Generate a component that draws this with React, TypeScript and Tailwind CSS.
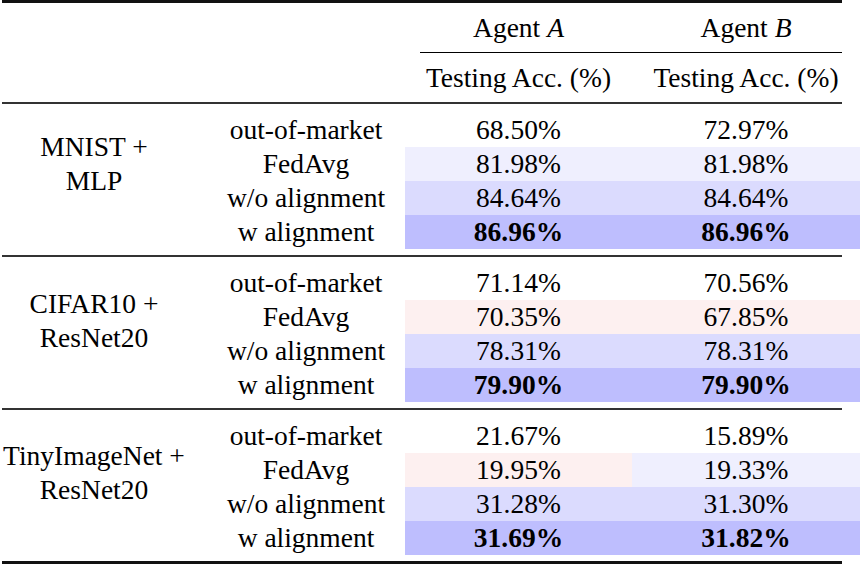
import React from "react";

type Cell = { v: string; bg: string };
type Row = { m: string; a: Cell; b: Cell; bold?: boolean };
type Block = { l1: string; l2: string; pt: string; rows: Row[] };

const W = "";
const B1 = "bg-[#efeffe]";
const B2 = "bg-[#dbdbfe]";
const B3 = "bg-[#bebefe]";
const R1 = "bg-[#fdf0f0]";

const blocks: Block[] = [
  {
    l1: "MNIST +",
    l2: "MLP",
    pt: "pt-[17px]",
    rows: [
      { m: "out-of-market", a: { v: "68.50%", bg: W }, b: { v: "72.97%", bg: W } },
      { m: "FedAvg", a: { v: "81.98%", bg: B1 }, b: { v: "81.98%", bg: B1 } },
      { m: "w/o alignment", a: { v: "84.64%", bg: B2 }, b: { v: "84.64%", bg: B2 } },
      { m: "w alignment", a: { v: "86.96%", bg: B3 }, b: { v: "86.96%", bg: B3 }, bold: true },
    ],
  },
  {
    l1: "CIFAR10 +",
    l2: "ResNet20",
    pt: "pt-[21px]",
    rows: [
      { m: "out-of-market", a: { v: "71.14%", bg: W }, b: { v: "70.56%", bg: W } },
      { m: "FedAvg", a: { v: "70.35%", bg: R1 }, b: { v: "67.85%", bg: R1 } },
      { m: "w/o alignment", a: { v: "78.31%", bg: B2 }, b: { v: "78.31%", bg: B2 } },
      { m: "w alignment", a: { v: "79.90%", bg: B3 }, b: { v: "79.90%", bg: B3 }, bold: true },
    ],
  },
  {
    l1: "TinyImageNet +",
    l2: "ResNet20",
    pt: "pt-[20px]",
    rows: [
      { m: "out-of-market", a: { v: "21.67%", bg: W }, b: { v: "15.89%", bg: W } },
      { m: "FedAvg", a: { v: "19.95%", bg: R1 }, b: { v: "19.33%", bg: B1 } },
      { m: "w/o alignment", a: { v: "31.28%", bg: B2 }, b: { v: "31.30%", bg: B2 } },
      { m: "w alignment", a: { v: "31.69%", bg: B3 }, b: { v: "31.82%", bg: B3 }, bold: true },
    ],
  },
];

function Rule({ thick }: { thick?: boolean }) {
  return (
    <div
      className={
        thick
          ? "ml-[2px] w-[840px] h-[3px] bg-[#111]"
          : "ml-[2px] w-[840px] h-[2px] bg-[#333]"
      }
    />
  );
}

export default function App() {
  return (
    <div
      className="w-[863px] h-[568px] bg-white text-black text-[27.5px] leading-[34px]"
      style={{ fontFamily: '"Liberation Serif", "Times New Roman", serif' }}
    >
      <Rule thick />
      <div className="flex h-[49px] items-center">
        <div className="w-[405px]" />
        <div className="w-[227px] text-center">
          Agent <i>A</i>
        </div>
        <div className="w-[228px] text-center">
          Agent <i>B</i>
        </div>
      </div>
      <div className="ml-[420px] w-[422px] h-[1px] bg-black" />
      <div className="flex h-[49px] items-center">
        <div className="w-[405px]" />
        <div className="w-[227px] text-center">Testing Acc. (%)</div>
        <div className="w-[228px] text-center">Testing Acc. (%)</div>
      </div>
      <Rule />
      {blocks.map((blk, i) => (
        <div key={i}>
          <div className="flex pt-[9px] pb-[6px]">
            <div className={`w-[188px] text-center ${blk.pt}`}>
              <div>{blk.l1}</div>
              <div>{blk.l2}</div>
            </div>
            <div className="ml-[19px] flex flex-col">
              {blk.rows.map((r, j) => (
                <div key={j} className="flex h-[34px]">
                  <div className="w-[198px] text-center">{r.m}</div>
                  <div className={`w-[227px] text-center ${r.a.bg} ${r.bold ? "font-bold" : ""}`}>
                    {r.a.v}
                  </div>
                  <div className={`w-[228px] text-center ${r.b.bg} ${r.bold ? "font-bold" : ""}`}>
                    {r.b.v}
                  </div>
                </div>
              ))}
            </div>
          </div>
          <Rule thick={i === 2} />
        </div>
      ))}
    </div>
  );
}
